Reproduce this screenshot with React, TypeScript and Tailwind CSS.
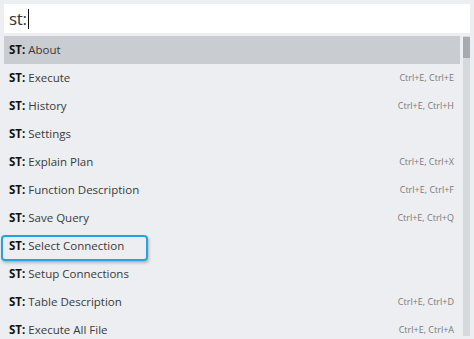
const items: [string, string][] = [
  ["About", ""],
  ["Execute", "Ctrl+E, Ctrl+E"],
  ["History", "Ctrl+E, Ctrl+H"],
  ["Settings", ""],
  ["Explain Plan", "Ctrl+E, Ctrl+X"],
  ["Function Description", "Ctrl+E, Ctrl+F"],
  ["Save Query", "Ctrl+E, Ctrl+Q"],
  ["Select Connection", ""],
  ["Setup Connections", ""],
  ["Table Description", "Ctrl+E, Ctrl+D"],
  ["Execute All File", "Ctrl+E, Ctrl+A"],
];

export default function App() {
  return (
    <div
      className="w-[474px] h-[339px] overflow-hidden bg-[#eceef1] pt-[4px] pl-[4px] pr-[4px]"
      style={{ fontFamily: '"Open Sans", "Noto Sans", sans-serif' }}
    >
      <div className="h-[29px] bg-white flex items-center pl-[5px]">
        <span className="text-[17px] leading-none text-[#333] tracking-[-0.3px]">st:</span>
        <span className="ml-[1px] w-[1.5px] h-[20px] bg-[#111]" />
      </div>
      <div className="mt-[3px] flex gap-[3px]">
        <div className="w-[456px]">
          {items.map(([label, shortcut], i) => (
            <div
              key={label}
              className={`relative h-[28px] flex items-center justify-between pl-[5px] pr-[6px] ${
                i === 0 ? "bg-[#c9ccd1]" : ""
              }`}
            >
              <span className="text-[11.5px] text-[#3a3a3a]">
                <span className="font-bold text-[#111]">ST:</span> {label}
              </span>
              {shortcut && <span className="text-[9px] text-[#7a7a7a]">{shortcut}</span>}
              {label === "Select Connection" && (
                <span className="absolute left-[-3px] top-[3px] w-[147px] h-[26px] rounded-[4px] border-[2.5px] border-[#22a4df] shadow-[1px_2px_3px_rgba(0,0,0,0.25)]" />
              )}
            </div>
          ))}
        </div>
        <div className="w-[7px] h-[300px] bg-[#d6d9dc] pt-[1px]">
          <div className="h-[21px] bg-[#a7aaae]" />
        </div>
      </div>
    </div>
  );
}
